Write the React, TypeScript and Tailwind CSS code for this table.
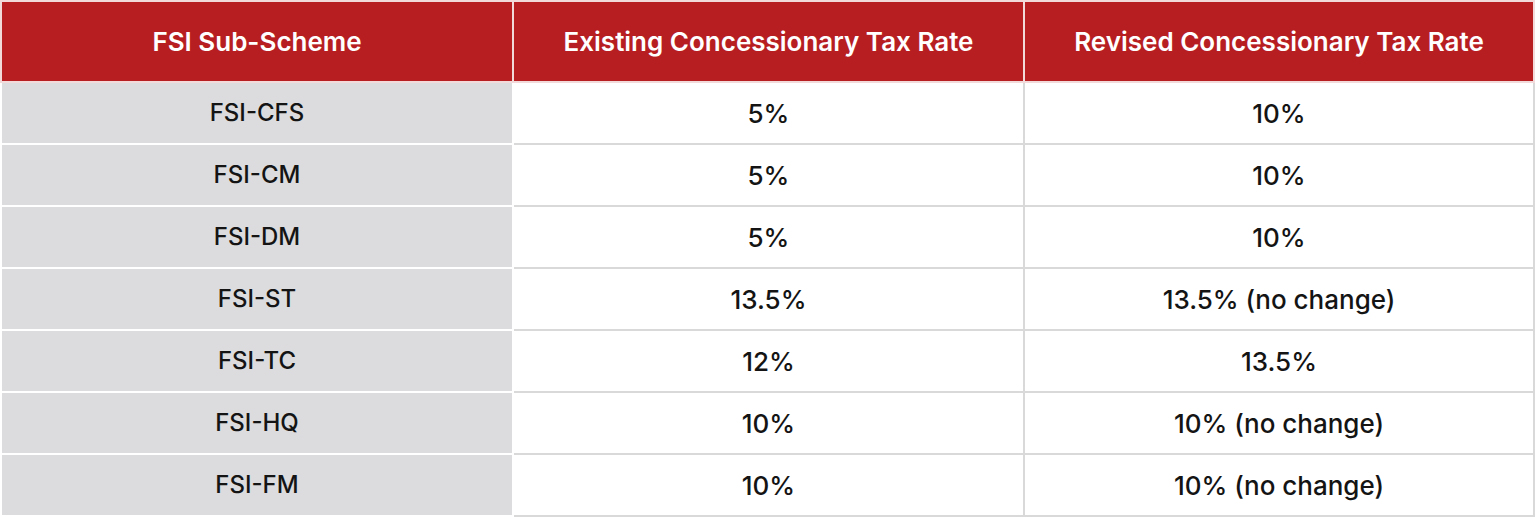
import React from "react";

interface Row {
  scheme: string;
  existing: string;
  revised: string;
}

const rows: Row[] = [
  { scheme: "FSI-CFS", existing: "5%", revised: "10%" },
  { scheme: "FSI-CM", existing: "5%", revised: "10%" },
  { scheme: "FSI-DM", existing: "5%", revised: "10%" },
  { scheme: "FSI-ST", existing: "13.5%", revised: "13.5% (no change)" },
  { scheme: "FSI-TC", existing: "12%", revised: "13.5%" },
  { scheme: "FSI-HQ", existing: "10%", revised: "10% (no change)" },
  { scheme: "FSI-FM", existing: "10%", revised: "10% (no change)" },
];

const App: React.FC = () => {
  return (
    <div className="w-[1536px] h-[518px] bg-white font-['Inter','Liberation_Sans',sans-serif]">
      <table className="w-[1535px] border-collapse table-fixed border border-[#e4e4e4]">
        <colgroup>
          <col className="w-[512px]" />
          <col className="w-[511px]" />
          <col />
        </colgroup>
        <thead>
          <tr className="h-[81px] bg-[#b71e21] text-white text-[26px]">
            <th className="border-2 border-[#f3dada] font-semibold">FSI Sub-Scheme</th>
            <th className="border-2 border-[#f3dada] font-semibold">
              Existing Concessionary Tax Rate
            </th>
            <th className="border-2 border-[#f3dada] font-semibold">
              Revised Concessionary Tax Rate
            </th>
          </tr>
        </thead>
        <tbody className="text-[26px] font-medium text-[#141414]">
          {rows.map((row) => (
            <tr key={row.scheme} className="h-[62px]">
              <td className="bg-[#dcdcde] border-2 border-white text-center text-[24px]">
                {row.scheme}
              </td>
              <td className="border-2 border-[#d9d9d9] text-center">{row.existing}</td>
              <td className="border-2 border-[#d9d9d9] text-center">{row.revised}</td>
            </tr>
          ))}
        </tbody>
      </table>
    </div>
  );
};

export default App;
